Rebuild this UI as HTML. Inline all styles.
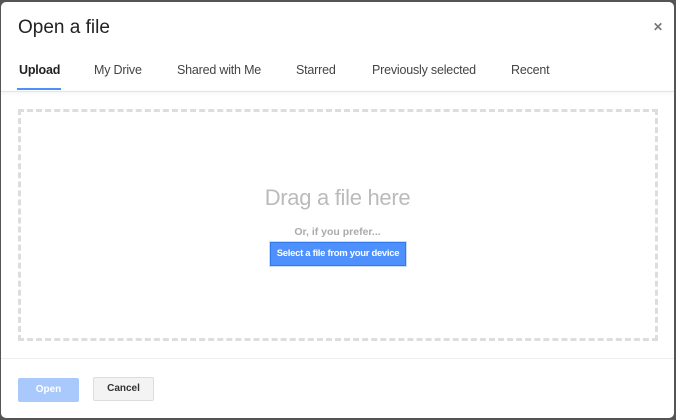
<!DOCTYPE html>
<html><head><style>
html,body{margin:0;padding:0;width:676px;height:420px;background:#555;overflow:hidden;font-family:"Liberation Sans",Arial,sans-serif}
.d{position:absolute;left:1px;top:2px;width:673px;height:416px;background:#fff;border-radius:5px;overflow:hidden}
.t{position:absolute;left:17px;top:15px;font-size:19px;color:#222}
.x{position:absolute;left:652px;top:18px;font-size:12px;color:#777;font-weight:bold}
.tab{position:absolute;top:61px;font-size:12.5px;color:#444;letter-spacing:-0.2px;white-space:nowrap}
.ul{position:absolute;left:16px;top:86px;width:44px;height:2px;background:#4d90fe}
.hb{position:absolute;left:0;top:89px;width:100%;height:1px;background:#e5e5e5;box-shadow:0 1px 3px rgba(0,0,0,.12)}
.dz{position:absolute;left:17px;top:107px;width:634px;height:226px;border:3px dashed #ddd}
.dr{position:absolute;left:0;width:100%;text-align:center;top:183px;font-size:22px;color:#bbb;letter-spacing:-0.3px}
.or{position:absolute;left:0;width:100%;text-align:center;top:224px;font-size:10.5px;color:#aaa;font-weight:bold}
.sel{position:absolute;left:269px;top:240px;width:136px;height:24px;background:#4d90fe;border:1px solid #3079ed;color:#fff;font-size:9.5px;font-weight:bold;text-align:center;line-height:22px;box-sizing:border-box;box-shadow:0 0 0 1px #cde;white-space:nowrap;letter-spacing:-0.3px}
.fb{position:absolute;left:0;top:356px;width:100%;height:1px;background:#eee}
.b{position:absolute;top:375px;width:61px;height:24px;line-height:24px;text-align:center;font-size:10px;font-weight:bold;border-radius:2px;box-sizing:border-box}
</style></head><body>
<div class="d">
<div class="t">Open a file</div>
<div class="x">✕</div>
<div class="tab" style="left:18px;font-weight:bold;color:#222">Upload</div>
<div class="tab" style="left:93px">My Drive</div>
<div class="tab" style="left:176px">Shared with Me</div>
<div class="tab" style="left:295px">Starred</div>
<div class="tab" style="left:371px">Previously selected</div>
<div class="tab" style="left:510px">Recent</div>
<div class="ul"></div>
<div class="hb"></div>
<div class="dz"></div>
<div class="dr">Drag a file here</div>
<div class="or">Or, if you prefer...</div>
<div class="sel">Select a file from your device</div>
<div class="fb"></div>
<div class="b" style="left:17px;top:376px;background:#a9c8fb;color:#fff">Open</div>
<div class="b" style="left:92px;background:#f3f3f3;border:1px solid #ddd;color:#333;line-height:22px">Cancel</div>
</div>
</body></html>
